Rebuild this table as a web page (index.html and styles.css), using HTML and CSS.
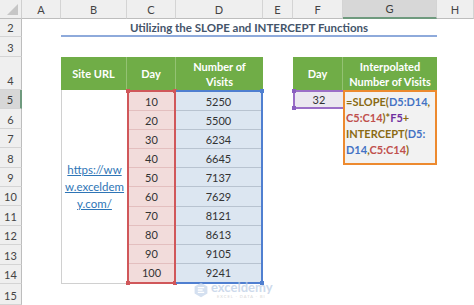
FILE: index.html
```html
<!DOCTYPE html>
<html lang="en">
<head>
    <meta charset="UTF-8">
    <title>SLOPE and INTERCEPT</title>
    <link rel="stylesheet" href="styles.css">
</head>
<body>
    <div class="sheet">
        <div class="corner"><span class="tri"></span></div>
        <div class="col-head">A</div>
        <div class="col-head">B</div>
        <div class="col-head">C</div>
        <div class="col-head">D</div>
        <div class="col-head">E</div>
        <div class="col-head">F</div>
        <div class="col-head active">G</div>
        <div class="col-head">H</div>

        <div class="row-head">2</div>
        <div class="row-head">3</div>
        <div class="row-head">4</div>
        <div class="row-head active">5</div>
        <div class="row-head">6</div>
        <div class="row-head">7</div>
        <div class="row-head">8</div>
        <div class="row-head">9</div>
        <div class="row-head">10</div>
        <div class="row-head">11</div>
        <div class="row-head">12</div>
        <div class="row-head">13</div>
        <div class="row-head">14</div>
        <div class="row-head">15</div>

        <div class="title">Utilizing the SLOPE and INTERCEPT Functions</div>

        <div class="th th-b">Site URL</div>
        <div class="th th-c">Day</div>
        <div class="th th-d">Number of<br>Visits</div>
        <div class="th th-f">Day</div>
        <div class="th th-g">Interpolated<br>Number of Visits</div>

        <div class="url-cell"><a href="#">https://ww<br>w.exceldem<br>y.com/</a></div>

        <div class="range range-day" id="day-range">
            <span class="handle tl"></span><span class="handle tr"></span>
            <span class="handle bl"></span><span class="handle br"></span>
        </div>
        <div class="range range-visits" id="visits-range">
            <span class="handle tr"></span><span class="handle br"></span>
        </div>

        <div class="input-cell">32
            <span class="handle tl"></span><span class="handle bl"></span>
        </div>

        <div class="formula">
            <span class="f-o">=SLOPE(</span><span class="f-b">D5:D14</span><span class="f-o">,</span><br>
            <span class="f-r">C5:C14</span><span class="f-o">)*</span><span class="f-p">F5</span><span class="f-o">+</span><br>
            <span class="f-o">INTERCEPT(</span><span class="f-b">D5:</span><br>
            <span class="f-b">D14</span><span class="f-o">,</span><span class="f-r">C5:C14</span><span class="f-o">)</span>
        </div>

        <div class="watermark">
            <svg viewBox="0 0 20 20" width="16" height="16"><path d="M10 1 L18 5.5 L18 14.5 L10 19 L2 14.5 L2 5.5 Z" fill="#c3d3ea"/><path d="M6 7 L14 7 M6 10 L12 10 M6 13 L14 13" stroke="#fff" stroke-width="1.6"/></svg>
            <div class="wm-text">
                <div class="wm-name">exceldemy</div>
                <div class="wm-tag">EXCEL · DATA · BI</div>
            </div>
        </div>
    </div>
    <script>
        const days = [10, 20, 30, 40, 50, 60, 70, 80, 90, 100];
        const visits = [5250, 5500, 6234, 6645, 7137, 7629, 8121, 8613, 9105, 9241];

        const dayRange = document.getElementById('day-range');
        const visitsRange = document.getElementById('visits-range');
        days.forEach((d, i) => {
            const c = document.createElement('div');
            c.className = 'cell';
            c.textContent = d;
            dayRange.appendChild(c);

            const v = document.createElement('div');
            v.className = 'cell';
            v.textContent = visits[i];
            visitsRange.appendChild(v);
        });
    </script>
</body>
</html>
```

FILE: styles.css
```css
html, body {
    margin: 0;
    padding: 0;
    background: #ffffff;
    overflow: hidden;
}
.sheet {
    display: grid;
    grid-template-columns: 22px 39px 66px 49px 87px 30px 50px 94px 1fr;
    grid-template-rows: 19px 18px 20px 33px repeat(10, 19.4px) 1fr;
    width: 474px;
    height: 305px;
    font-family: Lato, "Liberation Sans", sans-serif;
    position: relative;
}
.corner {
    grid-row: 1;
    grid-column: 1;
    background: #efefef;
    border-right: 1px solid #cfcfcf;
    border-bottom: 1px solid #bdbdbd;
    position: relative;
}
.corner .tri {
    position: absolute;
    right: 3px;
    bottom: 3px;
    width: 0;
    height: 0;
    border-left: 11px solid transparent;
    border-bottom: 11px solid #c6c6c6;
}
.col-head {
    grid-row: 1;
    background: #efefef;
    border-right: 1px solid #d4d4d4;
    border-bottom: 1px solid #bdbdbd;
    color: #444;
    font-size: 11px;
    display: flex;
    align-items: center;
    justify-content: center;
}
.col-head.active {
    background: #d7d7d7;
    border-bottom: 2px solid #6f9a7e;
    color: #3c3c3c;
}
.row-head {
    grid-column: 1;
    background: #efefef;
    border-right: 1px solid #bdbdbd;
    border-bottom: 1px solid #d4d4d4;
    color: #444;
    font-size: 11px;
    display: flex;
    align-items: flex-end;
    justify-content: center;
    padding-bottom: 2px;
}
.row-head.active {
    background: #d7d7d7;
    border-right: 2px solid #6f9a7e;
    color: #3c3c3c;
}
.title {
    grid-row: 2;
    grid-column: 3 / 9;
    border-bottom: 2px solid #8eaadb;
    color: #44546a;
    font-weight: bold;
    font-size: 11.5px;
    display: flex;
    align-items: center;
    justify-content: center;
}
.th {
    grid-row: 4;
    background: #70ad47;
    color: #ffffff;
    font-weight: bold;
    font-size: 11px;
    line-height: 15px;
    text-align: center;
    display: flex;
    align-items: center;
    justify-content: center;
    border-right: 1px solid #94c273;
}
.th-b { grid-column: 3; }
.th-c { grid-column: 4; }
.th-d { grid-column: 5; border-right: none; }
.th-f { grid-column: 7; }
.th-g { grid-column: 8; border-right: none; }
.url-cell {
    grid-row: 5 / 15;
    grid-column: 3;
    border-left: 1px solid #d0d0d0;
    border-bottom: 1px solid #d0d0d0;
    display: flex;
    align-items: center;
    justify-content: center;
    text-align: center;
    font-size: 11.5px;
    line-height: 17px;
}
.url-cell a {
    color: #2e75b6;
    text-decoration: underline;
}
.range {
    grid-row: 5 / 15;
    display: flex;
    flex-direction: column;
    position: relative;
    font-size: 11px;
    color: #333;
}
.range .cell {
    flex: 1;
    display: flex;
    align-items: center;
    justify-content: center;
}
.range-day {
    grid-column: 4;
    background: #f2dcdb;
    border: 2px solid #d0575a;
}
.range-day .cell {
    border-bottom: 1px solid #e3bfbf;
}
.range-visits {
    grid-column: 5;
    background: #dce6f1;
    border: 2px solid #4f7fd0;
    border-left: none;
}
.range-visits .cell {
    border-bottom: 1px solid #b8c3d0;
}
.range .cell:last-of-type {
    border-bottom: none;
}
.handle {
    position: absolute;
    width: 4px;
    height: 4px;
    background: #d0575a;
}
.handle.tl { left: -3px; top: -3px; }
.handle.tr { right: -3px; top: -3px; }
.handle.bl { left: -3px; bottom: -3px; }
.handle.br { right: -3px; bottom: -3px; }
.range-visits .handle { background: #4f7fd0; }
.input-cell {
    grid-row: 5;
    grid-column: 7;
    background: #ebe8f0;
    border: 2px solid #9b6fc7;
    border-right: none;
    position: relative;
    font-size: 11px;
    color: #333;
    display: flex;
    align-items: center;
    justify-content: center;
}
.input-cell .handle { background: #8a5fc0; }
.formula {
    grid-row: 5 / 9;
    grid-column: 8;
    align-self: start;
    height: 75px;
    box-sizing: border-box;
    background: #f2f2f2;
    border: 2px solid #ed8a2f;
    padding: 2px 0 0 1px;
    font-weight: bold;
    font-size: 11px;
    line-height: 16px;
    white-space: nowrap;
    position: relative;
    z-index: 1;
}
.f-o { color: #8a6a12; }
.f-b { color: #4472c4; }
.f-r { color: #c0504d; }
.f-p { color: #7030a0; }
.watermark {
    position: absolute;
    left: 193px;
    top: 281px;
    display: flex;
    align-items: center;
    gap: 2px;
    opacity: 0.7;
}
.wm-text {
    display: flex;
    flex-direction: column;
    line-height: 1;
}
.wm-name {
    color: #b9cbe4;
    font-size: 13px;
    font-weight: bold;
}
.wm-tag {
    color: #c8c8c8;
    font-size: 4px;
    letter-spacing: 1px;
    padding-left: 6px;
    margin-top: 1px;
}
```
